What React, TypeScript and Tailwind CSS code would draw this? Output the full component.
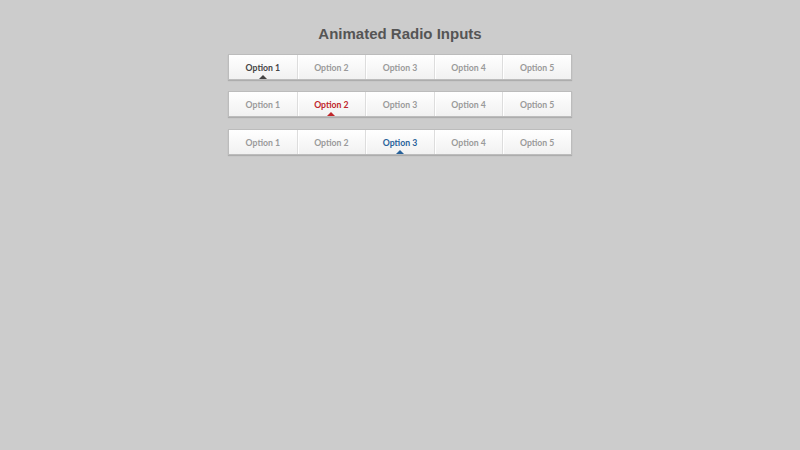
import React, { useState } from 'react';

type Theme = {
  text: string;
  arrow: string;
};

const options = ['Option 1', 'Option 2', 'Option 3', 'Option 4', 'Option 5'];

// each group gets its own accent colour
const themes: Theme[] = [
  { text: 'text-[#444444]', arrow: 'border-b-[#444444]' },
  { text: 'text-[#c0262b]', arrow: 'border-b-[#c0262b]' },
  { text: 'text-[#28629a]', arrow: 'border-b-[#28629a]' },
];

function RadioGroup({ name, theme, initial }: { name: string; theme: Theme; initial: number }) {
  const [selected, setSelected] = useState(initial);

  return (
    <div className="flex h-[26px] w-[344px] border border-[#bcbcbc] bg-gradient-to-b from-white to-[#f1f1f1] shadow-[0_1px_1px_rgba(0,0,0,0.15)]">
      {options.map((label, i) => {
        const active = i === selected;
        return (
          <label
            key={label}
            className={`relative flex flex-1 cursor-pointer items-center justify-center pt-px text-[8.7px] font-bold ${
              i < options.length - 1 ? 'border-r border-[#dddddd] shadow-[1px_0_0_#ffffff]' : ''
            } ${active ? theme.text : 'text-[#9a9a9a]'}`}
          >
            <input
              type="radio"
              name={name}
              checked={active}
              onChange={() => setSelected(i)}
              className="hidden"
            />
            {label}
            {active && (
              <span
                className={`absolute bottom-0 left-1/2 -ml-[4px] h-0 w-0 border-x-[4px] border-b-[4px] border-x-transparent ${theme.arrow}`}
              />
            )}
          </label>
        );
      })}
    </div>
  );
}

export default function App() {
  return (
    <div
      className="flex min-h-[450px] w-full flex-col items-center bg-[#cccccc] pt-[24px]"
      style={{ fontFamily: 'Lato, "Open Sans", sans-serif' }}
    >
      <h1
        className="mb-[11px] text-[15px] font-bold leading-[19px] text-[#555555]"
        style={{ fontFamily: '"Liberation Sans", Arial, sans-serif' }}
      >
        Animated Radio Inputs
      </h1>
      <div className="flex flex-col gap-[11px]">
        <RadioGroup name="group-1" theme={themes[0]} initial={0} />
        <RadioGroup name="group-2" theme={themes[1]} initial={1} />
        <div className="pt-px">
          <RadioGroup name="group-3" theme={themes[2]} initial={2} />
        </div>
      </div>
    </div>
  );
}
